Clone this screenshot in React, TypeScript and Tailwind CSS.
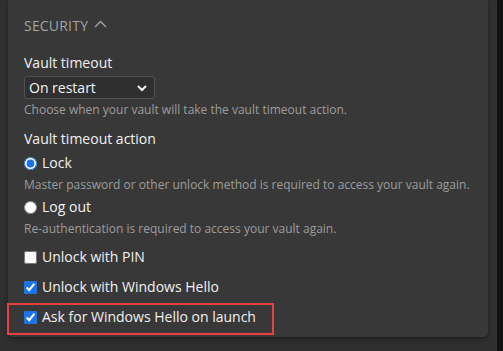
import React from "react";

export default function App() {
  const font = { fontFamily: '"Open Sans", "Noto Sans", sans-serif' };
  const label = "leading-[20px] text-[14px] font-medium text-[#f2f2f2]";
  const help = "h-[16px] leading-[16px] text-[12px] text-[#9d9d9d] whitespace-nowrap";
  return (
    <div className="relative flex w-[503px] h-[351px] overflow-hidden bg-[#2f2f2f]" style={font}>
      <div className="flex-1 pl-[8px] pr-[9px]">
        <div className="h-[337px] rounded-b-[5px] bg-[#383838] shadow-[0_2px_4px_rgba(0,0,0,0.35)] pl-[16px] pt-[15px]">
          <div className="flex items-center h-[20px] text-[14px] text-[#a3a3a3] tracking-[0.2px]">
            <span>SECURITY</span>
            <svg className="ml-[6px] mb-[2px]" width="13" height="8" viewBox="0 0 13 8" fill="none">
              <path d="M1 7L6.5 1.5L12 7" stroke="#a3a3a3" strokeWidth="1.3" />
            </svg>
          </div>

          <div className={"mt-[18px] h-[20px] " + label}>Vault timeout</div>
          <div className="relative mt-[3px] w-[131px] h-[23px] rounded-[3px] border border-[#505050] bg-[#2f2f2f]">
            <div className="pl-[4px] leading-[21px] text-[14px] font-medium text-[#f5f5f5]">On restart</div>
            <svg className="absolute right-[7px] top-[8px]" width="10" height="7" viewBox="0 0 10 7" fill="none">
              <path d="M1 1L5 5L9 1" stroke="#f5f5f5" strokeWidth="2" />
            </svg>
          </div>
          <div className={"mt-[3px] " + help}>
            Choose when your vault will take the vault timeout action.
          </div>

          <div className={"mt-[11px] h-[20px] " + label}>Vault timeout action</div>
          <label className="mt-[4px] flex items-center h-[20px] gap-[5px]">
            <input type="radio" name="a" defaultChecked className="m-0 w-[13px] h-[13px] accent-[#1a73e8]" />
            <span className={label}>Lock</span>
          </label>
          <div className={"mt-[4px] " + help}>
            Master password or other unlock method is required to access your vault again.
          </div>
          <label className="mt-[4px] flex items-center h-[20px] gap-[5px]">
            <input type="radio" name="a" className="m-0 w-[13px] h-[13px] accent-[#1a73e8]" />
            <span className={label}>Log out</span>
          </label>
          <div className={"mt-[4px] " + help}>
            Re-authentication is required to access your vault again.
          </div>

          <label className="mt-[10px] flex items-center h-[20px] gap-[5px]">
            <input type="checkbox" className="m-0 w-[13px] h-[13px] accent-[#1a73e8]" />
            <span className={label}>Unlock with PIN</span>
          </label>
          <label className="mt-[10px] flex items-center h-[20px] gap-[5px]">
            <input type="checkbox" defaultChecked className="m-0 w-[13px] h-[13px] accent-[#1a73e8]" />
            <span className={label}>Unlock with Windows Hello</span>
          </label>
          <label className="mt-[10px] flex items-center h-[20px] gap-[5px]">
            <input type="checkbox" defaultChecked className="m-0 w-[13px] h-[13px] accent-[#1a73e8]" />
            <span className={label}>Ask for Windows Hello on launch</span>
          </label>
        </div>
      </div>
      <div className="w-[6px] bg-[#111111]" />
      <div className="absolute left-[7px] top-[303px] w-[267px] h-[32px] border-2 border-[#e8413f]" />
    </div>
  );
}
